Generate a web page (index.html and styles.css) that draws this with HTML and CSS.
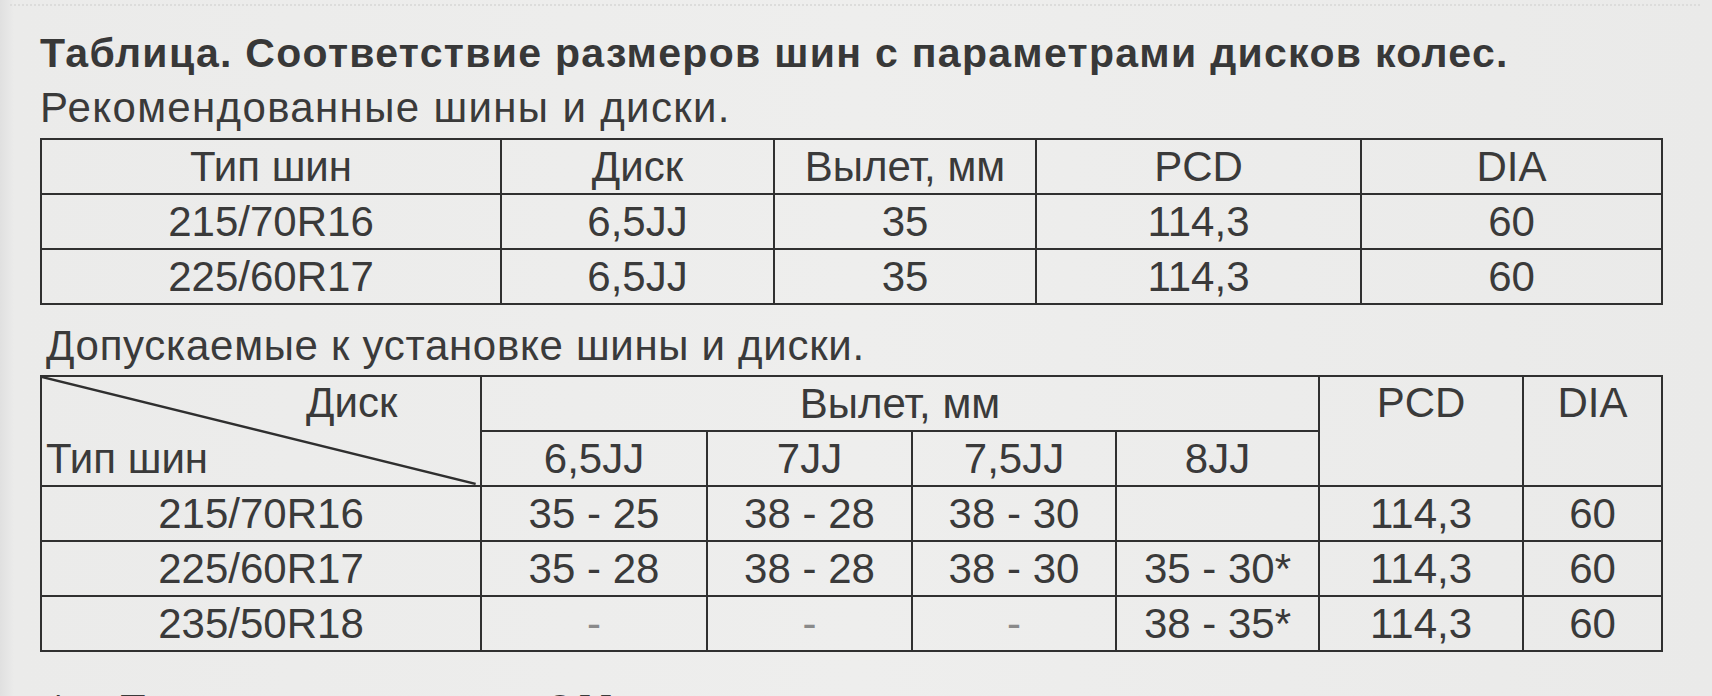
FILE: index.html
```html
<!DOCTYPE html>
<html lang="ru">
<head>
<meta charset="utf-8">
<title>Таблица</title>
<link rel="stylesheet" href="styles.css">
</head>
<body>
<div class="page">
  <div class="scan-top"></div>
  <h1 class="title">Таблица. Соответствие размеров шин с параметрами дисков колес.</h1>
  <p class="caption">Рекомендованные шины и диски.</p>
  <table class="grid t1">
    <colgroup>
      <col class="c1a"><col class="c1b"><col class="c1c"><col class="c1d"><col class="c1e">
    </colgroup>
    <tr><td>Тип шин</td><td>Диск</td><td>Вылет, мм</td><td>PCD</td><td>DIA</td></tr>
    <tr><td>215/70R16</td><td>6,5JJ</td><td>35</td><td>114,3</td><td>60</td></tr>
    <tr><td>225/60R17</td><td>6,5JJ</td><td>35</td><td>114,3</td><td>60</td></tr>
  </table>
  <p class="caption caption2">Допускаемые к установке шины и диски.</p>
  <table class="grid t2">
    <colgroup>
      <col class="c2a"><col class="c2b"><col class="c2c"><col class="c2d"><col class="c2e"><col class="c2f"><col class="c2g">
    </colgroup>
    <tr>
      <td rowspan="2" class="diag">
        <svg class="diag-line" viewBox="0 0 100 100" preserveAspectRatio="none"><line x1="0" y1="0" x2="99" y2="99" stroke="#2f2f2f" stroke-width="2.4" vector-effect="non-scaling-stroke"/></svg>
        <span class="d-top">Диск</span>
        <span class="d-bot">Тип шин</span>
      </td>
      <td colspan="4">Вылет, мм</td>
      <td rowspan="2" class="top">PCD</td>
      <td rowspan="2" class="top">DIA</td>
    </tr>
    <tr><td>6,5JJ</td><td>7JJ</td><td>7,5JJ</td><td>8JJ</td></tr>
    <tr><td>215/70R16</td><td>35 - 25</td><td>38 - 28</td><td>38 - 30</td><td></td><td>114,3</td><td>60</td></tr>
    <tr><td>225/60R17</td><td>35 - 28</td><td>38 - 28</td><td>38 - 30</td><td>35 - 30*</td><td>114,3</td><td>60</td></tr>
    <tr><td>235/50R18</td><td class="dash">-</td><td class="dash">-</td><td class="dash">-</td><td>38 - 35*</td><td>114,3</td><td>60</td></tr>
  </table>
  <p class="footnote">*&nbsp; Применение дисков 8JJ допускается только с шинами указанных размеров.</p>
</div>
</body>
</html>
```
FILE: styles.css
```css
html, body {
  margin: 0;
  padding: 0;
  background: #ebebea;
  height: 696px;
  overflow: hidden;
}
.page {
  height: 696px;
  padding-left: 40px;
  font-family: "Liberation Sans", Arial, sans-serif;
  color: #3a3a3a;
  background: linear-gradient(90deg, #e0e0e0 0, #ebebea 14px, #eeeeed 50%, #eaeae9 100%);
  box-sizing: border-box;
}
.scan-top {
  height: 4px;
  margin-left: -30px;
  width: 1690px;
  border-bottom: 2px dotted #dcdcdb;
}
.title {
  margin: 24px 0 0 0;
  height: 46px;
  font-size: 41px;
  line-height: 46px;
  font-weight: bold;
  letter-spacing: 1.3px;
  color: #383838;
  white-space: nowrap;
}
.caption {
  margin: 9px 0 0 0;
  height: 46px;
  font-size: 42px;
  line-height: 46px;
  letter-spacing: 1.35px;
  white-space: nowrap;
}
.caption2 {
  margin: 18px 0 0 6px;
  letter-spacing: 0.7px;
}
.grid {
  border-collapse: collapse;
  table-layout: fixed;
  width: 1621px;
  margin-top: 7px;
  font-size: 42px;
  color: #3a3a3a;
}
.grid td {
  border: 2.5px solid #303030;
  height: 53px;
  padding: 0;
  text-align: center;
  vertical-align: middle;
  line-height: 40px;
  white-space: nowrap;
}
.t2 { margin-top: 6px; }
.c1a { width: 460px; } .c1b { width: 273px; } .c1c { width: 262px; } .c1d { width: 325px; } .c1e { width: 301px; }
.c2a { width: 440px; } .c2b { width: 226px; } .c2c { width: 205px; } .c2d { width: 204px; } .c2e { width: 203px; } .c2f { width: 204px; } .c2g { width: 139px; }
.grid td.top { vertical-align: top; padding-top: 6px; }
.grid td.diag { position: relative; text-align: left; vertical-align: top; }
.diag-line {
  position: absolute;
  left: 0; top: 0;
  width: 100%; height: 100%;
}
.d-top { display: block; padding-left: 264px; padding-top: 6px; line-height: 40px; }
.d-bot { display: block; padding-left: 4px; padding-top: 16px; line-height: 40px; }
.dash { color: #8a8a8a; }
.footnote {
  margin: 35px 0 0 10px;
  font-size: 42px;
  line-height: 46px;
  white-space: nowrap;
  word-spacing: 14px;
}
```
